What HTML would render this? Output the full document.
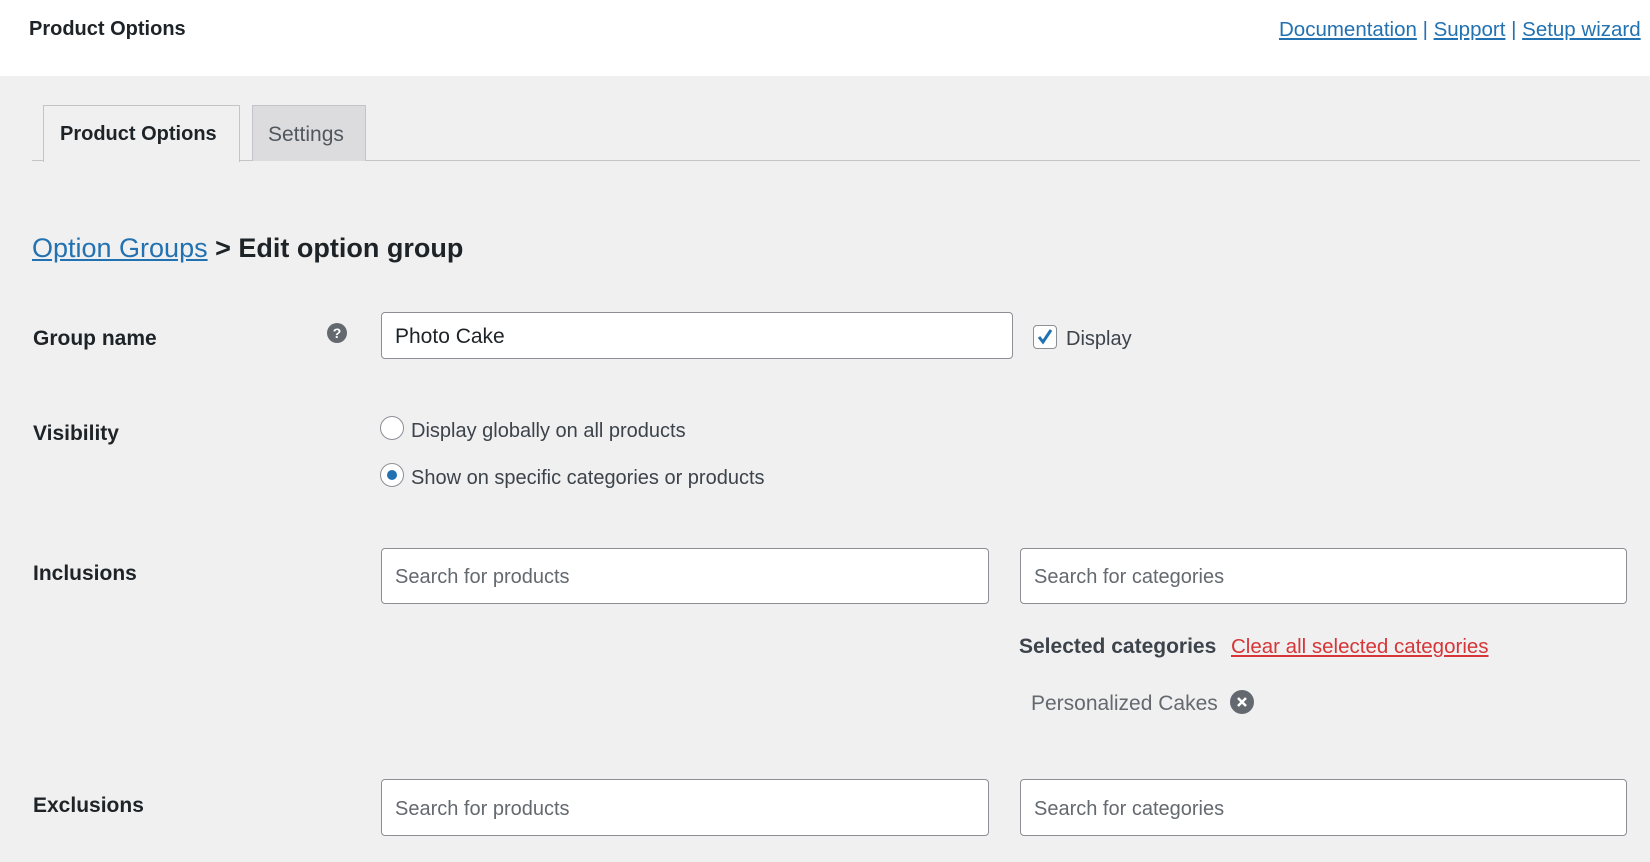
<!DOCTYPE html>
<html><head><style>
body{margin:0;width:1650px;height:862px;background:#f0f0f1;font-family:"Liberation Sans",sans-serif;color:#1d2327;position:relative;overflow:hidden}
.a{position:absolute;white-space:nowrap}
.hdr{position:absolute;left:0;top:0;width:1650px;height:76px;background:#fff}
a{color:#2271b1;text-decoration:underline}
.inp{position:absolute;background:#fff;border:1px solid #8c8f94;border-radius:4px;box-sizing:border-box;font-size:20px;color:#646970;padding-left:13px;display:flex;align-items:center;padding-top:3px}
.lbl{font-size:21px;font-weight:bold;color:#1d2327}
.radio{position:absolute;width:24px;height:24px;border:1px solid #8c8f94;border-radius:50%;background:#fff;box-sizing:border-box}
</style></head><body>
<div class="hdr"></div>
<div class="a" style="left:29px;top:18px;font-size:20px;font-weight:bold">Product Options</div>
<div class="a" style="left:1279px;top:18px;font-size:20.5px;color:#2271b1"><a>Documentation</a> | <a>Support</a> | <a>Setup wizard</a></div>

<div class="a" style="left:32px;top:160px;width:1608px;height:1px;background:#c3c4c7"></div>
<div class="a" style="left:43px;top:105px;width:197px;height:57px;background:#f0f0f1;border:1px solid #c3c4c7;border-bottom:none;box-sizing:border-box"></div>
<div class="a" style="left:60px;top:123px;font-size:20px;font-weight:bold">Product Options</div>
<div class="a" style="left:252px;top:105px;width:114px;height:56px;background:#dcdcde;border:1px solid #c3c4c7;border-bottom:none;box-sizing:border-box"></div>
<div class="a" style="left:268px;top:123px;font-size:21px;color:#50575e">Settings</div>

<div class="a" style="left:32px;top:233px;font-size:27px;"><a>Option Groups</a> <b>&gt; Edit option group</b></div>

<div class="a lbl" style="left:33px;top:327px;">Group name</div>
<div class="a" style="left:327px;top:323px;width:20px;height:20px;border-radius:50%;background:#646970;color:#fff;font-size:14px;font-weight:bold;text-align:center;line-height:20px">?</div>
<div class="inp" style="left:381px;top:312px;width:632px;height:47px;color:#1d2327;font-size:21px">Photo Cake</div>
<div class="a" style="left:1033px;top:325px;width:24px;height:24px;border:1px solid #8c8f94;border-radius:4px;background:#fff;box-sizing:border-box"><svg width="22" height="22" viewBox="0 0 22 22"><path d="M5 11l4 5 8-12" stroke="#2271b1" stroke-width="3" fill="none"/></svg></div>
<div class="a" style="left:1066px;top:328px;font-size:20px;color:#3c434a">Display</div>

<div class="a lbl" style="left:33px;top:422px;">Visibility</div>
<div class="radio" style="left:380px;top:416px"></div>
<div class="a" style="left:411px;top:420px;font-size:20px;color:#3c434a">Display globally on all products</div>
<div class="radio" style="left:380px;top:463px"><div style="position:absolute;left:6px;top:6px;width:10px;height:10px;border-radius:50%;background:#2271b1"></div></div>
<div class="a" style="left:411px;top:467px;font-size:20px;color:#3c434a">Show on specific categories or products</div>

<div class="a lbl" style="left:33px;top:562px;">Inclusions</div>
<div class="inp" style="left:381px;top:548px;width:608px;height:56px">Search for products</div>
<div class="inp" style="left:1020px;top:548px;width:607px;height:56px">Search for categories</div>
<div class="a lbl" style="left:1019px;top:635px;color:#3c434a">Selected categories</div>
<div class="a" style="left:1231px;top:635px;font-size:20.5px;color:#d63638;text-decoration:underline">Clear all selected categories</div>
<div class="a" style="left:1031px;top:692px;font-size:21px;color:#646970">Personalized Cakes</div>
<div class="a" style="left:1230px;top:690px;width:24px;height:24px;border-radius:50%;background:#646970"><svg width="24" height="24"><path d="M8 8l8 8M16 8l-8 8" stroke="#fff" stroke-width="2.5"/></svg></div>

<div class="a lbl" style="left:33px;top:794px;">Exclusions</div>
<div class="inp" style="left:381px;top:779px;width:608px;height:57px">Search for products</div>
<div class="inp" style="left:1020px;top:779px;width:607px;height:57px">Search for categories</div>
</body></html>
